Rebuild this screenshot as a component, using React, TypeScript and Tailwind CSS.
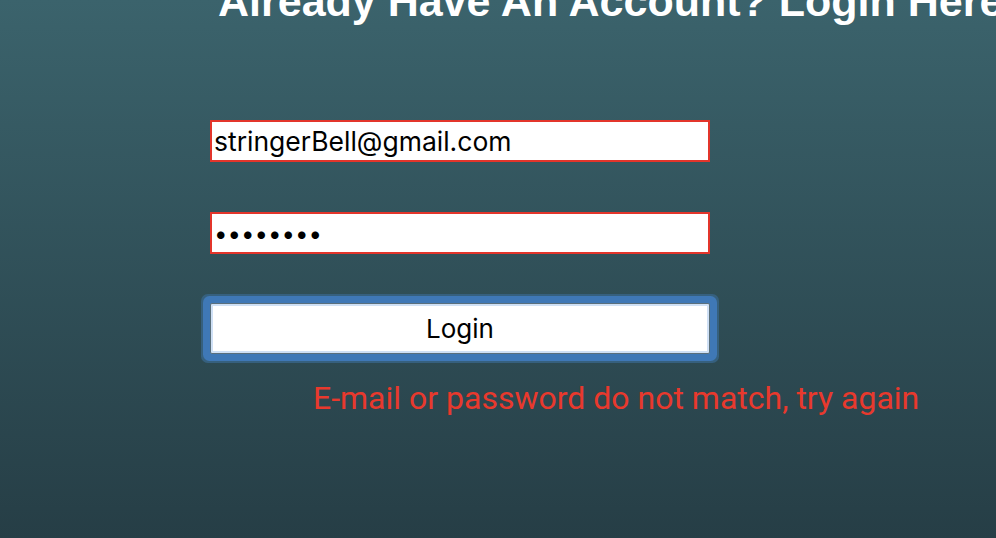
export default function App() {
    return (
        <div className="h-[538px] w-full overflow-hidden bg-gradient-to-b from-[#3b636c] to-[#263e46]">
            <h1 className="mt-[-24px] ml-[218px] whitespace-nowrap font-['Liberation_Sans',Arial,sans-serif] text-[43px] font-bold leading-[50px] text-white">
                Already Have An Account? Login Here
            </h1>

            <form className="ml-[210px] mt-[94px] flex w-[500px] flex-col">
                <input
                    type="email"
                    defaultValue="stringerBell@gmail.com"
                    className="h-[42px] w-[500px] border-2 border-[#e3352b] bg-white px-[2px] font-['Inter',sans-serif] text-[26.5px] text-black outline-none"
                />
                <input
                    type="password"
                    defaultValue="password"
                    className="mt-[50px] h-[42px] w-[500px] border-2 border-[#e3352b] bg-white px-[2px] font-['Inter',sans-serif] text-[24px] text-black outline-none"
                />
                <button
                    type="button"
                    className="mt-[49px] h-[51px] w-[500px] rounded-[2px] border border-[#5a6f7c] bg-white font-['Inter',sans-serif] text-[26px] text-black shadow-[inset_0_0_0_2px_#cfe0f5,0_0_0_7px_#3f78b6,0_0_0_9px_#36607e]"
                >
                    Login
                </button>
            </form>

            <p className="ml-[313px] mt-[24px] whitespace-nowrap font-['Roboto',sans-serif] text-[32px] leading-[40px] text-[#e8392d]">
                E-mail or password do not match, try again
            </p>
        </div>
    );
}
